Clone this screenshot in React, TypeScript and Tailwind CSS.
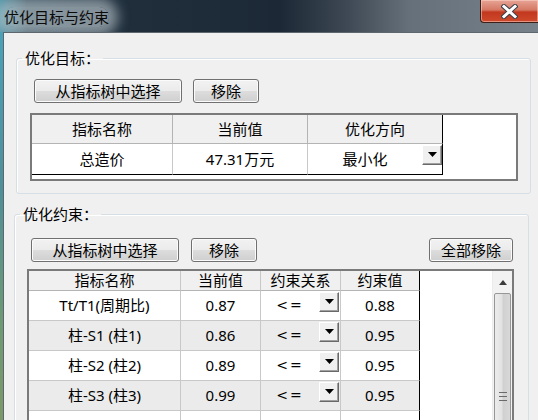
import React from 'react';

const btn =
  'h-[24px] rounded-[3px] border border-[#707070] bg-[linear-gradient(180deg,#f2f2f2_0%,#ebebeb_50%,#dddddd_50%,#cfcfcf_100%)] shadow-[inset_0_0_0_1px_#fbfbfb] text-[15px] leading-none text-black flex items-center justify-center';

function DropButton({ className = '' }: { className?: string }) {
  return (
    <div
      className={`w-[20px] h-[20px] flex items-start justify-center pt-[6px] bg-[#f0f0f0] border border-t-white border-l-white border-r-[#696969] border-b-[#696969] shadow-[inset_-1px_-1px_0_#a0a0a0] ${className}`}
    >
      <svg width="9" height="5" viewBox="0 0 9 5">
        <path d="M0 0h9L4.5 5z" fill="#000" />
      </svg>
    </div>
  );
}

function TitleBar() {
  return (
    <div className="h-[32px] flex items-start bg-[linear-gradient(90deg,#4a93a6_0%,#2b4453_5%,#202e3c_24%,#1c2835_52%,#3c4753_64%,#65707a_76%,#77818a_100%)]">
      <span className="ml-[4px] mt-[7px] text-[15px] leading-[20px] text-[#0b0b0b] rounded-[10px] bg-[rgba(196,206,212,0.6)] shadow-[0_0_12px_9px_rgba(196,206,212,0.6)]">
        优化目标与约束
      </span>
      <div className="ml-auto w-[58px] h-[23px] flex items-center justify-center rounded-bl-[4px] border border-t-0 border-r-0 border-[#3d1f18] bg-[linear-gradient(180deg,#e7a596_0%,#d57864_45%,#c2381f_55%,#cf4a2c_100%)] shadow-[inset_0_0_0_1px_rgba(255,220,210,0.5)]">
        <svg width="17" height="15" viewBox="0 0 17 15">
          <path d="M3 2.5L14 12.5M14 2.5L3 12.5" stroke="#3a3f4a" strokeWidth="5" strokeLinecap="square" />
          <path d="M3 2.5L14 12.5M14 2.5L3 12.5" stroke="#fff" strokeWidth="3" strokeLinecap="square" />
        </svg>
      </div>
    </div>
  );
}

function GoalGroup() {
  return (
    <fieldset className="ml-[12px] mt-[15px] w-[515px] px-[5px] pb-[12px] rounded-[3px] border border-[#d5dfe5] shadow-[inset_1px_1px_0_#fff]">
      <legend className="px-[3px] text-[15px] leading-[20px]">优化目标：</legend>
      <div className="mt-[11px] ml-[12px] flex gap-[11px]">
        <button className={`${btn} w-[148px]`}>从指标树中选择</button>
        <button className={`${btn} w-[66px]`}>移除</button>
      </div>
      <div className="ml-[8px] mt-[10px] w-[488px] h-[68px] border-2 border-[#7a7a7a] bg-white">
        <div className="grid grid-cols-[141px_135px_135px] w-[411px] text-[15px]">
          <div className="h-[29px] flex items-center justify-center bg-[#f0f0f0] border-r border-b border-[#b4b4b4]">指标名称</div>
          <div className="h-[29px] flex items-center justify-center bg-[#f0f0f0] border-r border-b border-[#b4b4b4]">当前值</div>
          <div className="h-[29px] flex items-center justify-center bg-[#f0f0f0] border-r border-r-black border-b border-b-[#b4b4b4]">优化方向</div>
          <div className="h-[31px] flex items-center justify-center border-r border-r-[#c8c8c8] border-b border-b-black">总造价</div>
          <div className="h-[31px] flex items-center justify-center border-r border-r-[#c8c8c8] border-b border-b-black">47.31万元</div>
          <div className="h-[31px] flex items-start border-r border-b border-black">
            <span className="flex-1 h-full flex items-center justify-center">最小化</span>
            <DropButton className="mt-[1px]" />
          </div>
        </div>
      </div>
    </fieldset>
  );
}

const rows = [
  { name: 'Tt/T1(周期比)', cur: '0.87', rel: '<=', val: '0.88' },
  { name: '柱-S1 (柱1)', cur: '0.86', rel: '<=', val: '0.95' },
  { name: '柱-S2 (柱2)', cur: '0.89', rel: '<=', val: '0.95' },
  { name: '柱-S3 (柱3)', cur: '0.99', rel: '<=', val: '0.95' },
  { name: '', cur: '', rel: '', val: '' },
];

function ConstraintGroup() {
  return (
    <fieldset className="ml-[10px] mt-[10px] w-[515px] h-[260px] px-[5px] rounded-[3px] border border-[#d5dfe5] shadow-[inset_1px_1px_0_#fff]">
      <legend className="px-[3px] text-[15px] leading-[20px]">优化约束：</legend>
      <div className="mt-[14px] ml-[11px] mr-[10px] flex gap-[12px]">
        <button className={`${btn} w-[148px]`}>从指标树中选择</button>
        <button className={`${btn} w-[66px]`}>移除</button>
        <button className={`${btn} w-[84px] ml-auto`}>全部移除</button>
      </div>
      <div className="ml-[7px] mt-[7px] w-[487px] h-[200px] flex border-2 border-[#7a7a7a] bg-white">
        <div className="grid grid-cols-[152px_80px_80px_79px] w-[391px] content-start text-[15px]">
          {['指标名称', '当前值', '约束关系', '约束值'].map((h, i) => (
            <div
              key={h}
              className={`h-[20px] flex items-center justify-center bg-[#f0f0f0] border-b border-b-[#b4b4b4] border-r ${i === 3 ? 'border-r-black' : 'border-r-[#c8c8c8]'}`}
            >
              {h}
            </div>
          ))}
          {rows.map((r, idx) => {
            const bg = idx % 2 === 1 ? 'bg-[#ebebeb]' : 'bg-white';
            return (
              <React.Fragment key={idx}>
                <div className={`h-[30px] flex items-center justify-center border-r border-b border-[#c8c8c8] ${bg}`}>{r.name}</div>
                <div className={`h-[30px] flex items-center justify-center border-r border-b border-[#c8c8c8] ${bg}`}>{r.cur}</div>
                <div className={`h-[30px] flex items-start border-r border-b border-[#c8c8c8] ${bg}`}>
                  <span className="flex-1 h-full flex items-center justify-center font-['DejaVu_Sans',sans-serif] text-[14px] tracking-[2px]">{r.rel}</span>
                  {r.rel && <DropButton className="mt-[1px] mr-[1px]" />}
                </div>
                <div className={`h-[30px] flex items-center justify-center border-r border-r-black border-b border-b-[#c8c8c8] ${bg}`}>{r.val}</div>
              </React.Fragment>
            );
          })}
        </div>
        <div className="flex-1" />
        <div className="w-[20px] flex flex-col bg-[#f2f2f2] border-l border-[#ececec]">
          <div className="h-[22px] flex items-center justify-center">
            <svg width="8" height="5" viewBox="0 0 8 5">
              <path d="M0 5h8L4 0z" fill="#3c3c3c" />
            </svg>
          </div>
          <div className="flex-1 mx-[1px] rounded-[2px] border border-[#979797] bg-[linear-gradient(90deg,#ececec_0%,#e2e2e2_45%,#d0d0d0_55%,#d8d8d8_100%)] flex flex-col items-center justify-end pb-[65px] gap-[3px]">
            <div className="w-[8px] h-[1px] bg-[#6a6a6a]" />
            <div className="w-[8px] h-[1px] bg-[#6a6a6a]" />
            <div className="w-[8px] h-[1px] bg-[#6a6a6a]" />
          </div>
        </div>
      </div>
    </fieldset>
  );
}

export default function App() {
  return (
    <div className="w-[538px] h-[420px] overflow-hidden flex flex-col bg-[#f0f0f0] text-black font-['Noto_Sans','Noto_Sans_CJK_SC',sans-serif]">
      <TitleBar />
      <div className="flex flex-1 min-h-0">
        <div className="w-[3px] bg-[linear-gradient(180deg,#49a2b8_0%,#4f8f9a_40%,#6e9a72_75%,#7d9868_100%)]" />
        <div className="flex-1 min-w-0 border-l border-t border-[#5d6770] bg-[#f0f0f0]">
          <GoalGroup />
          <ConstraintGroup />
        </div>
      </div>
    </div>
  );
}
